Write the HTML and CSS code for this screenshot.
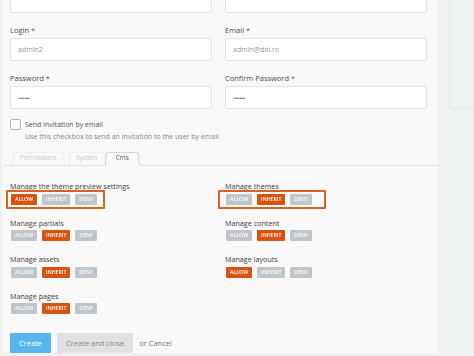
FILE: index.html
```html
<!DOCTYPE html>
<html lang="en">
<head>
  <meta charset="UTF-8" />
  <title>Create user</title>
  <link rel="stylesheet" href="styles.css">
</head>
<body>
  <div class="page">
    <main class="panel">
      <div class="fields">
        <div class="field"><input class="input" type="text" /></div>
        <div class="field"><input class="input" type="text" /></div>

        <div class="field">
          <label class="label">Login <span class="req">*</span></label>
          <input class="input" type="text" value="admin2" />
        </div>
        <div class="field">
          <label class="label">Email <span class="req">*</span></label>
          <input class="input" type="text" value="admin@doi.ro" />
        </div>

        <div class="field">
          <label class="label">Password <span class="req">*</span></label>
          <input class="input dots" type="text" value="······" />
        </div>
        <div class="field">
          <label class="label">Confirm Password <span class="req">*</span></label>
          <input class="input dots" type="text" value="······" />
        </div>
      </div>

      <div class="invite">
        <div class="check-row">
          <span class="checkbox"></span>
          <span>Send invitation by email</span>
        </div>
        <p class="help">Use this checkbox to send an invitation to the user by email</p>
      </div>

      <div class="tabs">
        <span class="tab">Permissions</span>
        <span class="tab">System</span>
        <span class="tab active">Cms</span>
      </div>

      <div class="perms">
        <div class="perm">
          <div class="perm-label">Manage the theme preview settings</div>
          <div class="btns mark mark-left">
            <span class="btn on">Allow</span><span class="btn">Inherit</span><span class="btn">Deny</span>
          </div>
        </div>
        <div class="perm">
          <div class="perm-label">Manage themes</div>
          <div class="btns mark mark-right">
            <span class="btn">Allow</span><span class="btn on">Inherit</span><span class="btn">Deny</span>
          </div>
        </div>

        <div class="perm">
          <div class="perm-label">Manage partials</div>
          <div class="btns">
            <span class="btn">Allow</span><span class="btn on">Inherit</span><span class="btn">Deny</span>
          </div>
        </div>
        <div class="perm">
          <div class="perm-label">Manage content</div>
          <div class="btns">
            <span class="btn">Allow</span><span class="btn on">Inherit</span><span class="btn">Deny</span>
          </div>
        </div>

        <div class="perm">
          <div class="perm-label">Manage assets</div>
          <div class="btns">
            <span class="btn">Allow</span><span class="btn on">Inherit</span><span class="btn">Deny</span>
          </div>
        </div>
        <div class="perm">
          <div class="perm-label">Manage layouts</div>
          <div class="btns">
            <span class="btn on">Allow</span><span class="btn">Inherit</span><span class="btn">Deny</span>
          </div>
        </div>

        <div class="perm">
          <div class="perm-label">Manage pages</div>
          <div class="btns">
            <span class="btn">Allow</span><span class="btn on">Inherit</span><span class="btn">Deny</span>
          </div>
        </div>
      </div>

      <div class="actions">
        <button class="primary">Create</button>
        <button class="secondary">Create and close</button>
        <span class="cancel">or Cancel</span>
      </div>
    </main>

    <aside class="sidebar">
      <div class="side-box"></div>
    </aside>
  </div>
</body>
</html>
```

FILE: styles.css
```css
body {
  margin: 0;
  font-family: 'Open Sans', 'Liberation Sans', sans-serif;
  background: #eef1f2;
  color: #4a4a4a;
}

.page {
  display: flex;
  height: 356px;
  overflow: hidden;
}

.panel {
  width: 436px;
  margin-left: 2px;
  background: #f9f9f9;
  padding: 0 11px 0 8px;
  box-sizing: border-box;
  height: 353px;
}

.fields {
  display: grid;
  grid-template-columns: 202px 202px;
  column-gap: 13px;
  row-gap: 12px;
  margin-top: -10px;
}

.field {
  display: flex;
  flex-direction: column;
}

.label {
  font-size: 7.5px;
  line-height: 10px;
  margin-bottom: 3px;
  color: #4a4a4a;
}

.req {
  color: #c0392b;
}

.input {
  height: 23px;
  box-sizing: border-box;
  border: 1px solid #e3e3e3;
  border-radius: 2px;
  background: #fff;
  padding: 0 7px;
  font-family: inherit;
  font-size: 7px;
  color: #999;
  outline: none;
}

.input.dots {
  font-size: 9px;
  font-weight: bold;
  letter-spacing: -0.6px;
  color: #666;
}

.invite {
  margin-top: 10px;
  font-size: 7px;
  color: #555;
}

.check-row {
  display: flex;
  align-items: center;
  gap: 4px;
  line-height: 11px;
}

.checkbox {
  width: 11px;
  height: 11px;
  box-sizing: border-box;
  border: 1px solid #b5b5b5;
  border-radius: 2px;
  background: #fff;
}

.help {
  margin: 2px 0 0 15px;
  line-height: 10px;
  color: #888;
}

.tabs {
  display: flex;
  margin: 8px -11px 0 -6px;
  padding-left: 8px;
  height: 15px;
  border-bottom: 1px solid #e2e2e2;
}

.tab {
  position: relative;
  z-index: 0;
  font-size: 6.5px;
  line-height: 15px;
  color: #c9c9c9;
  padding: 0 8px;
}

.tab + .tab {
  margin-left: 3px;
}

.tab::before {
  content: '';
  position: absolute;
  inset: 1px 0 0 0;
  z-index: -1;
  border: 1px solid #ececec;
  border-bottom: none;
  border-radius: 3px 3px 0 0;
  transform: perspective(12px) rotateX(3deg);
  transform-origin: bottom;
}

.tab.active {
  color: #555;
  padding: 0 11px;
  margin-left: -1px;
}

.tab.active::before {
  border-color: #d2d2d2;
  background: #f9f9f9;
  bottom: -1px;
}

.perms {
  display: grid;
  grid-template-columns: 202px 202px;
  column-gap: 13px;
  row-gap: 13px;
  padding-top: 15px;
}

.perm-label {
  font-size: 7.2px;
  line-height: 11px;
  color: #3d3d3d;
  margin-bottom: 1.5px;
}

.btns {
  display: flex;
  gap: 5px;
  position: relative;
  width: max-content;
  margin-left: 1px;
}

.btn {
  height: 11px;
  line-height: 11px;
  padding: 0 4px;
  font-size: 5.2px;
  font-weight: 600;
  text-transform: uppercase;
  color: #fff;
  background: #bfc5c9;
  border-radius: 1px;
}

.btn.on {
  background: #d9530f;
}

.mark::after {
  content: '';
  position: absolute;
  border: 2px solid #d8631f;
  border-radius: 1px;
  pointer-events: none;
}

.mark-left::after {
  inset: -4px -8px -4px -5px;
}

.mark-right::after {
  inset: -4px -14px -4px -8px;
}

.actions {
  display: flex;
  align-items: center;
  gap: 6px;
  margin-top: 19px;
}

.actions button {
  height: 20px;
  border: none;
  border-radius: 1px;
  font-family: inherit;
  font-size: 7.5px;
  padding: 0 9px;
}

.primary {
  background: #5ab4f0;
  color: #fff;
}

.secondary {
  background: #e1e1e1;
  color: #888;
}

.cancel {
  font-size: 7.5px;
  color: #777;
}

.sidebar {
  flex: 1;
  background: #eef1f2;
  padding-left: 11px;
}

.side-box {
  height: 108px;
  border-left: 1px solid #e3e7e9;
  border-bottom: 1px solid #e3e7e9;
  box-sizing: border-box;
}
```
